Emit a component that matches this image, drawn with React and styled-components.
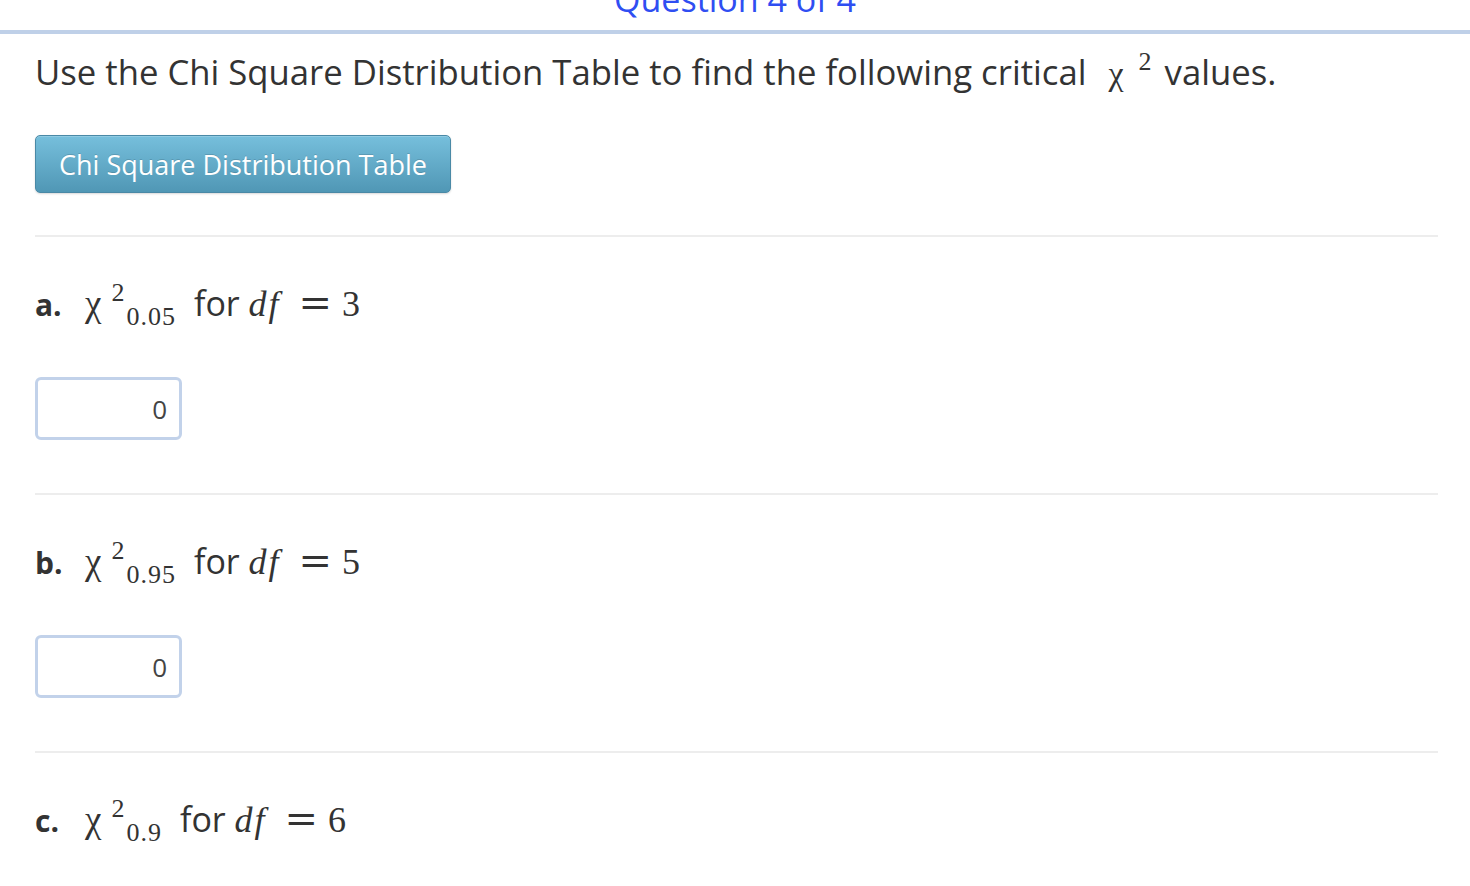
import React from "react";
import styled, { createGlobalStyle } from "styled-components";

const Global = createGlobalStyle`
  html, body { margin: 0; padding: 0; background: #fff; }
  body { font-family: "Open Sans", "Noto Sans", sans-serif; color: #333; }
`;

const Header = styled.header`
  height: 30px;
  overflow: hidden;
  border-bottom: 4px solid #bfd0e8;
  display: flex;
  justify-content: center;
`;

const Title = styled.div`
  font-size: 34px;
  line-height: 34px;
  margin-top: -18px;
  color: #2f4ef2;
`;

const Content = styled.main`
  padding: 0 32px 0 35px;
`;

const Heading = styled.p`
  margin: 14px 0 0;
  height: 48px;
  font-size: 34.7px;
  line-height: 48px;
  color: #333;
  white-space: pre;
`;

const Button = styled.button`
  display: block;
  margin-top: 39px;
  width: 416px;
  height: 58px;
  padding: 0;
  border: 1px solid #4a89a6;
  border-radius: 5px;
  background: linear-gradient(#76bfdc, #5097b5);
  box-shadow: 0 1px 2px rgba(0,0,0,0.15), inset 0 1px 0 rgba(255,255,255,0.2);
  color: #fff;
  font-family: "Open Sans", "Noto Sans", sans-serif;
  font-size: 27px;
  text-shadow: 0 -1px 0 rgba(0,0,0,0.15);
  text-align: center;
`;

const Rule = styled.hr`
  margin: ${p => p.$top || 0}px 0 0;
  border: 0;
  border-top: 2px solid #ededed;
`;

const Section = styled.section`
  padding: 44px 0 53px;
  border-bottom: 2px solid #ededed;
  &:last-child { border-bottom: 0; }
`;

const Prompt = styled.div`
  height: 48px;
  font-size: 30px;
  line-height: 48px;
  color: #333;
  white-space: pre;
`;

const Letter = styled.span`
  display: inline-block;
  font-weight: 700;
  width: 50px;
`;

const Text = styled.span`
  font-size: 34px;
  line-height: 1;
`;

const Serif = styled.span`
  font-family: "Liberation Serif", "Times New Roman", serif;
  font-size: ${p => p.$size || 36}px;
  line-height: 1;
  font-style: ${p => (p.$italic ? "italic" : "normal")};
  letter-spacing: ${p => p.$ls || 0}px;
  margin-left: ${p => p.$ml || 0}px;
  margin-right: ${p => p.$mr || 0}px;
`;

const Equals = styled.span`
  font-family: "DejaVu Serif", "Liberation Serif", serif;
  font-size: 40px;
  line-height: 1;
  margin-right: 10px;
`;

const Sup = styled.span`
  font-family: "Liberation Serif", "Times New Roman", serif;
  font-size: 26px;
  line-height: 1;
  position: relative;
  top: ${p => p.$top || -15}px;
  margin-left: ${p => p.$ml || 12}px;
  margin-right: ${p => p.$mr || 0}px;
`;

const Sub = styled.span`
  font-family: "Liberation Serif", "Times New Roman", serif;
  font-size: 26px;
  line-height: 1;
  letter-spacing: 1px;
  position: relative;
  top: 9px;
  margin-left: 2px;
  margin-right: 18px;
`;

const Input = styled.input`
  display: block;
  margin-top: 48px;
  box-sizing: border-box;
  width: 147px;
  height: 63px;
  border: 3px solid #c2d2ea;
  border-radius: 6px;
  padding: 0 12px;
  text-align: right;
  font-family: "Open Sans", "Noto Sans", sans-serif;
  font-size: 26px;
  color: #444;
  background: #fff;
  outline: none;
`;

const items = [
  { l: "a.", p: "0.05", df: "3", input: true },
  { l: "b.", p: "0.95", df: "5", input: true },
  { l: "c.", p: "0.9", df: "6", input: false },
];

export default function App() {
  return (
    <>
      <Global />
      <Header>
        <Title>Question 4 of 4</Title>
      </Header>
      <Content>
        <Heading>
          Use the Chi Square Distribution Table to find the following critical{" "}
          <Serif $size={34} $ml={13}>χ</Serif>
          <Sup $ml={15} $mr={4}>2</Sup> values.
        </Heading>
        <Button>Chi Square Distribution Table</Button>
        <Rule $top={42} />
        {items.map(it => (
          <Section key={it.l}>
            <Prompt>
              <Letter>{it.l}</Letter>
              <Serif $size={37}>χ</Serif>
              <Sup $ml={10}>2</Sup>
              <Sub>{it.p}</Sub>
              <Text>for </Text>
              <Serif $italic $ls={2} $mr={18}>df</Serif>
              <Equals>=</Equals>
              <Serif>{it.df}</Serif>
            </Prompt>
            {it.input && <Input defaultValue="0" />}
          </Section>
        ))}
      </Content>
    </>
  );
}
